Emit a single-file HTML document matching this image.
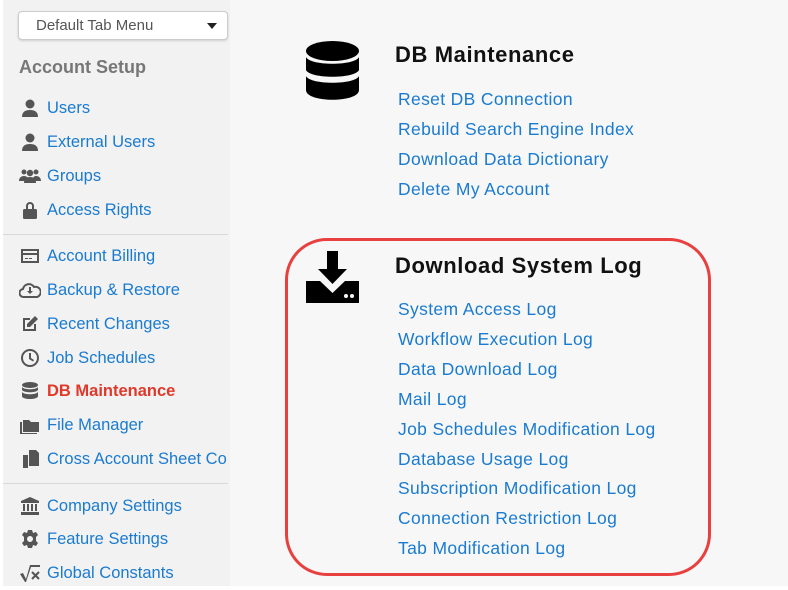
<!DOCTYPE html>
<html><head><style>
*{margin:0;padding:0;box-sizing:border-box}
body{width:788px;height:590px;background:#fff;font-family:"Liberation Sans",sans-serif;position:relative;overflow:hidden}
#side{position:absolute;left:3px;top:0;width:227px;height:586px;background:#f2f2f2}
#main{position:absolute;left:230px;top:0;width:558px;height:586px;background:#f7f7f7}
.sel{position:absolute;left:15px;top:11px;width:210px;height:29px;background:#fff;border:1px solid #ccc;border-radius:4px;box-shadow:0 1px 2px rgba(0,0,0,.15);font-size:15px;color:#555;padding:5px 0 0 17px}
.sel:after{content:"";position:absolute;right:10px;top:11px;border:5px solid transparent;border-top:6px solid #222}
h3{position:absolute;left:16px;top:57px;font-size:18px;color:#777;font-weight:bold}
.it{position:absolute;left:19px;font-size:16.5px;color:#1a7bd0;display:flex;align-items:center}
.it svg{width:22px;height:20px;margin-right:6px;fill:#555}
.act{color:#e0392b;font-weight:bold}
.hr{position:absolute;left:3px;width:225px;height:1px;background:#d8d8d8}
.t{position:absolute;left:395px;font-size:22px;font-weight:bold;color:#111;letter-spacing:0.6px}
.l{position:absolute;left:398px;font-size:17.5px;color:#1a7bd0;letter-spacing:0.35px}
#box{position:absolute;left:285px;top:238px;width:426px;height:338px;border:3px solid #e8403f;border-radius:42px}
</style></head><body>
<div id="side">
<div class="sel">Default Tab Menu</div>
<h3>Account Setup</h3>
</div>
<div class="it" style="top:98px"><svg viewBox="0 0 20 20"><circle cx="10" cy="6" r="4.5"/><path d="M2 19c0-5 3-7 8-7s8 2 8 7z"/></svg>Users</div>
<div class="it" style="top:132px"><svg viewBox="0 0 20 20"><circle cx="10" cy="6" r="4.5"/><path d="M2 19c0-5 3-7 8-7s8 2 8 7z"/></svg>External Users</div>
<div class="it" style="top:166px"><svg viewBox="0 0 22 20"><circle cx="5" cy="6" r="2.5"/><circle cx="17" cy="6" r="2.5"/><circle cx="11" cy="7" r="3.2"/><path d="M0 15c0-3 2-5 5-5s4 2 4 3v2zM13 15c0-1 1-5 4-5s5 2 5 5zM5 17c0-4 2-6 6-6s6 2 6 6z"/></svg>Groups</div>
<div class="it" style="top:200px"><svg viewBox="0 0 20 20"><path d="M6 9V6a4 4 0 018 0v3h-2V6a2 2 0 00-4 0v3z"/><rect x="3" y="9" width="14" height="10" rx="1.5"/></svg>Access Rights</div>
<div class="hr" style="top:234px"></div>
<div class="it" style="top:246px"><svg viewBox="0 0 20 20"><path d="M1 3h18v14H1zM3 5v2h14V5zM3 9v6h14V9zM5 12h3v1H5zM9 12h3v1H9z" fill-rule="evenodd"/></svg>Account Billing</div>
<div class="it" style="top:280px"><svg viewBox="0 0 22 20"><path d="M5 17a4 4 0 01-1-8 6 6 0 0111-2 5 5 0 013 10z" fill="none" stroke="#555" stroke-width="2"/><path d="M10 7h2v4h2l-3 3-3-3h2z"/></svg>Backup &amp; Restore</div>
<div class="it" style="top:314px"><svg viewBox="0 0 20 20"><path d="M3 4h7v2H5v9h9v-5h2v7H3z"/><path d="M15 2l3 3-8 8H7v-3z"/></svg>Recent Changes</div>
<div class="it" style="top:348px"><svg viewBox="0 0 20 20"><circle cx="10" cy="10" r="8" fill="none" stroke="#555" stroke-width="2"/><path d="M9 5h2v5l3 2-1 1.5-4-2.5z"/></svg>Job Schedules</div>
<div class="it act" style="top:381px"><svg viewBox="0 0 20 20"><ellipse cx="10" cy="4" rx="8" ry="3"/><path d="M2 6c2 3 14 3 16 0v3c-2 3-14 3-16 0zM2 11c2 3 14 3 16 0v4c0 4-16 4-16 0z"/></svg>DB Maintenance</div>
<div class="it" style="top:415px"><svg viewBox="0 0 22 20"><path d="M4 5h6l2 2h8v10H4z"/><path d="M1 7h2v11h15v1H1z"/></svg>File Manager</div>
<div class="it" style="top:449px;white-space:nowrap;width:211px;overflow:hidden"><svg viewBox="0 0 20 20" style="flex:none"><path d="M9 1h7l3 3v13H9z"/><path d="M3 6h5v13H3z"/></svg>Cross Account Sheet Co</div>
<div class="hr" style="top:483px"></div>
<div class="it" style="top:496px"><svg viewBox="0 0 20 20"><path d="M10 1l9 4v2H1V5zM3 8h2v7H3zM7 8h2v7H7zM11 8h2v7h-2zM15 8h2v7h-2zM1 16h18v3H1z"/></svg>Company Settings</div>
<div class="it" style="top:529px"><svg viewBox="0 0 20 20"><path d="M8 1h4l1 3 3-1 2 3-2 2v4l2 2-2 3-3-1-1 3H8l-1-3-3 1-2-3 2-2V8L2 6l2-3 3 1zM10 7a3 3 0 100 6 3 3 0 000-6z" fill-rule="evenodd"/></svg>Feature Settings</div>
<div class="it" style="top:563px"><svg viewBox="0 0 22 20"><path d="M1 11l3-1 3 6 4-14h10v2h-9L7 19h-1z"/><path d="M13 9l7 7M20 9l-7 7" stroke="#555" stroke-width="2"/></svg>Global Constants</div>
<div id="main"></div>
<svg style="position:absolute;left:306px;top:41px" width="53" height="59" viewBox="0 0 53 59"><ellipse cx="26.5" cy="10" rx="26.5" ry="10"/><path d="M0 16c4 9 49 9 53 0v13c-4 9-49 9-53 0zM0 35c4 9 49 9 53 0v14c0 13-53 13-53 0z"/></svg>
<div class="t" style="top:42px">DB Maintenance</div>
<div class="l" style="top:89px">Reset DB Connection</div>
<div class="l" style="top:119px">Rebuild Search Engine Index</div>
<div class="l" style="top:149px">Download Data Dictionary</div>
<div class="l" style="top:179px">Delete My Account</div>
<div id="box"></div>
<svg style="position:absolute;left:306px;top:251px" width="53" height="52" viewBox="0 0 53 52"><path d="M21 0h11v18h9L26.5 33 12 18h9z"/><path d="M0 30h14l12.5 12L39 30h14v22H0z"/><circle cx="40" cy="45" r="2" fill="#f7f7f7"/><circle cx="46" cy="45" r="2" fill="#f7f7f7"/></svg>
<div class="t" style="top:253px">Download System Log</div>
<div class="l" style="top:299px">System Access Log</div>
<div class="l" style="top:329px">Workflow Execution Log</div>
<div class="l" style="top:359px">Data Download Log</div>
<div class="l" style="top:389px">Mail Log</div>
<div class="l" style="top:419px">Job Schedules Modification Log</div>
<div class="l" style="top:449px">Database Usage Log</div>
<div class="l" style="top:478px">Subscription Modification Log</div>
<div class="l" style="top:508px">Connection Restriction Log</div>
<div class="l" style="top:538px">Tab Modification Log</div>
</body></html>
